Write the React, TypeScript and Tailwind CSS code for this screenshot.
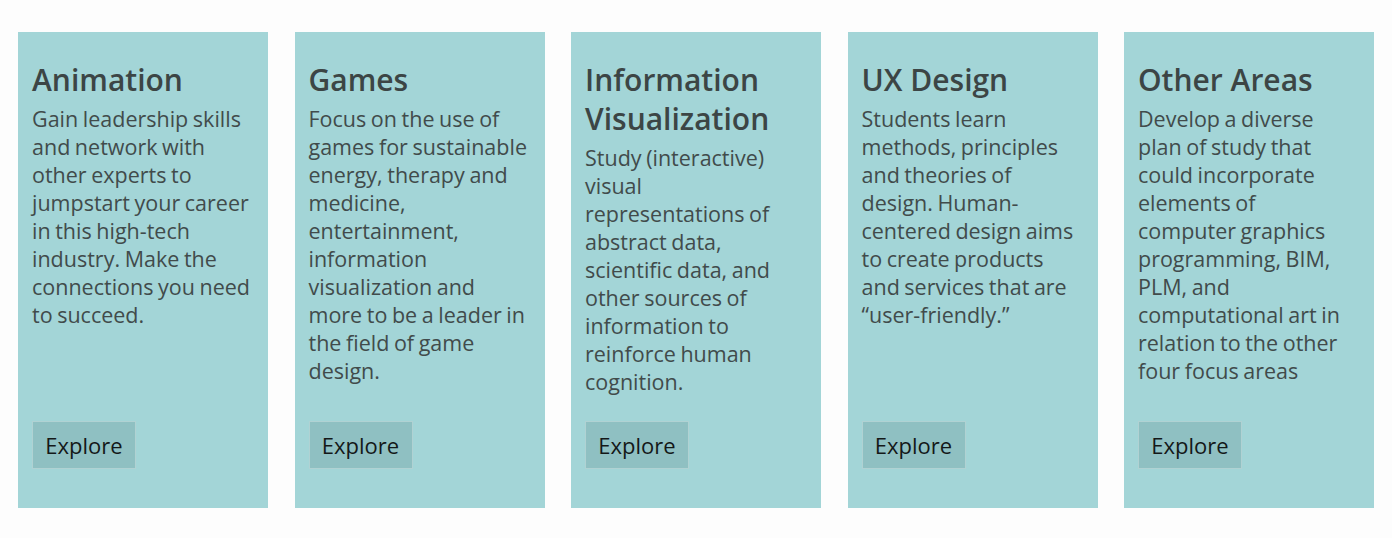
const areas = [
  {
    title: "Animation",
    body: "Gain leadership skills and network with other experts to jumpstart your career in this high-tech industry. Make the connections you need to succeed.",
  },
  {
    title: "Games",
    body: "Focus on the use of games for sustainable energy, therapy and medicine, entertainment, information visualization and more to be a leader in the field of game design.",
  },
  {
    title: "Information Visualization",
    body: "Study (interactive) visual representations of abstract data, scientific data, and other sources of information to reinforce human cognition.",
  },
  {
    title: "UX Design",
    body: "Students learn methods, principles and theories of design. Human-centered design aims to create products and services that are \u201cuser-friendly.\u201d",
  },
  {
    title: "Other Areas",
    body: "Develop a diverse plan of study that could incorporate elements of computer graphics programming, BIM, PLM, and computational art in relation to the other four focus areas",
  },
]

export default function App() {
  return (
    <div className="min-h-screen bg-[#fdfdfd] px-[18px] pt-[32px] font-['Open_Sans',sans-serif]">
      <div className="grid grid-cols-5 gap-[26.5px]">
        {areas.map(a => (
          <div key={a.title} className="h-[476px] bg-[#a3d5d7] pl-[14px] pr-[17px] pt-[28px] pb-[39px] flex flex-col">
            <h2 className="text-[30px] leading-[39px] font-semibold text-[#3c4545] mb-[6px] -mr-[4px]">
              {a.title}
            </h2>
            <p className="text-[21.5px] leading-[28px] [word-spacing:-1px] text-[#414b4b]">{a.body}</p>
            <button
              type="button"
              className="mt-auto self-start h-[48px] w-[104px] bg-[#8fc0c2] border border-[#b0d2d3] text-[22px] text-[#141818]"
            >
              Explore
            </button>
          </div>
        ))}
      </div>
    </div>
  )
}
